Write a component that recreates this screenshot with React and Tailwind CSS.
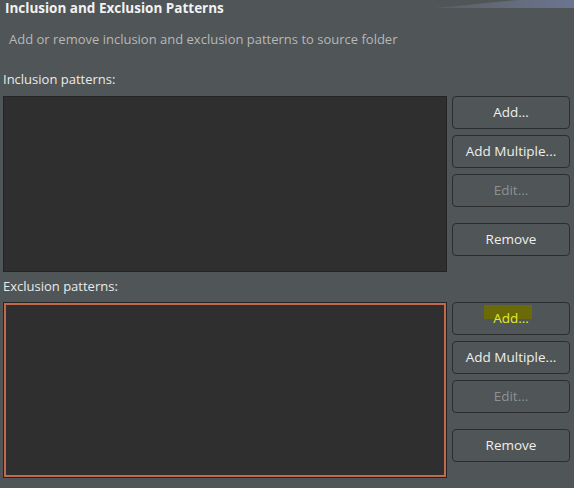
import React from "react";

function Btn({ children, disabled, className = "" }) {
  return (
    <button
      className={
        "h-[33px] w-full rounded-[4px] border border-[#2b2d2e] bg-[#505557] text-[13.5px] " +
        (disabled ? "text-[#8d9193] " : "text-[#eeeeec] ") +
        className
      }
    >
      {children}
    </button>
  );
}

function PatternSection({ label, labelClass, boxClass, highlightAdd }) {
  return (
    <div>
      <div className={"pl-[3px] text-[13px] leading-[18px] text-[#eaeaea] " + labelClass}>{label}</div>
      <div className="flex gap-[5px] pl-[3px]">
        <div className={"h-[176px] w-[444px] " + boxClass} />
        <div className="flex w-[118px] flex-col gap-[6px]">
          <Btn>
            {highlightAdd ? (
              <span className="relative inline-block">
                <span className="absolute left-[-9px] top-[-3px] h-[14px] w-[48px] bg-[#6a6b08]" />
                <span className="relative text-[#e6ec2a]">Add...</span>
              </span>
            ) : (
              "Add..."
            )}
          </Btn>
          <Btn>Add Multiple...</Btn>
          <Btn disabled>Edit...</Btn>
          <Btn className="mt-[10px]">Remove</Btn>
        </div>
      </div>
    </div>
  );
}

export default function App() {
  return (
    <div
      className="relative h-[488px] w-[574px] overflow-hidden bg-[#505557]"
      style={{ fontFamily: '"Open Sans", "DejaVu Sans", sans-serif' }}
    >
      <svg className="absolute right-0 top-0" width="140" height="10" viewBox="0 0 140 10">
        <defs>
          <linearGradient id="g" x1="0" x2="1" y1="0" y2="0">
            <stop offset="0" stopColor="#5a5f63" />
            <stop offset="1" stopColor="#6c7590" />
          </linearGradient>
        </defs>
        <path d="M0 8 C30 6 60 1 90 0 L140 0 L140 8 Z" fill="url(#g)" />
      </svg>

      <div className="relative pl-[5px] pt-[0px] text-[13.5px] font-bold leading-[17px] text-[#f2f2f2]">
        Inclusion and Exclusion Patterns
      </div>
      <div className="mt-[13px] pl-[9px] text-[13px] leading-[18px] text-[#b6b8b9]">
        Add or remove inclusion and exclusion patterns to source folder
      </div>

      <div className="mt-[22px]">
        <PatternSection
          label="Inclusion patterns:"
          labelClass="mb-[8px]"
          boxClass="border border-[#242424] bg-[#2f2f2f]"
        />
      </div>
      <div className="mt-[5px]">
        <PatternSection
          label="Exclusion patterns:"
          labelClass="mb-[7px]"
          boxClass="border border-[#242424] bg-[#2f2f2f] shadow-[inset_0_0_0_2px_#c0694c]"
          highlightAdd
        />
      </div>
    </div>
  );
}
